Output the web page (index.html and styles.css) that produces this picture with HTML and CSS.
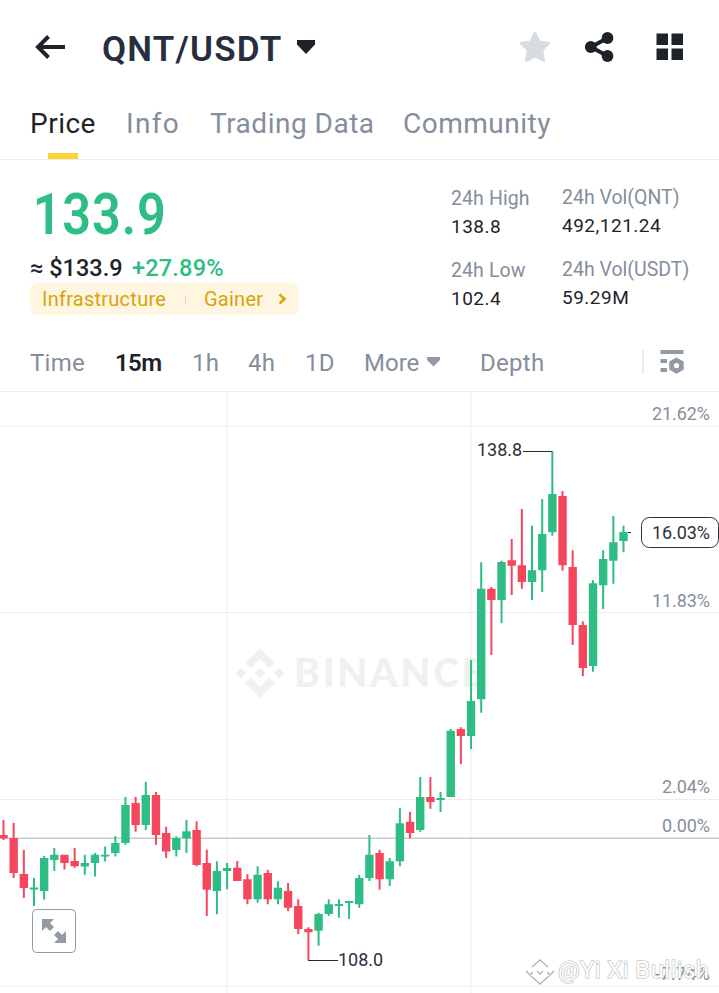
FILE: index.html
```html
<!DOCTYPE html>
<html lang="en">
<head>
    <meta charset="UTF-8">
    <meta name="viewport" content="width=device-width, initial-scale=1.0">
    <title>QNT/USDT</title>
    <link rel="stylesheet" href="styles.css">
</head>
<body>

    <!-- Top bar -->
    <header class="header">
        <svg class="back" width="32" height="26" viewBox="0 0 32 26"><path d="M31 13H5M14.500 2.500L4 13l10.500 10.500" fill="none" stroke="#1e2329" stroke-width="4"/></svg>
        <h1>QNT/USDT</h1>
        <svg class="pair-arrow" width="18" height="14" viewBox="0 0 18 14"><path d="M0 0h18v4.500L9 14 0 4.500z" fill="#1e2329"/></svg>
        <div class="header-icons">
            <svg width="30" height="30" viewBox="0 0 30 30"><path d="M15 1.500l4 8.500 9.500 1.300-6.800 6.700 1.800 10.500L15 24l-8.500 4.500L8.200 18 1.500 11.300 11 10z" fill="#d8dce1" stroke="#d8dce1" stroke-width="3" stroke-linejoin="round"/></svg>
            <svg width="30" height="30" viewBox="0 0 30 30"><path d="M23.500 6L7 15l16.500 9" fill="none" stroke="#1e2329" stroke-width="4"/><g fill="#1e2329"><circle cx="23.500" cy="6" r="5.900"/><circle cx="6.800" cy="15" r="5.900"/><circle cx="23.500" cy="24" r="5.900"/></g></svg>
            <svg width="28" height="28" viewBox="0 0 28 28"><path d="M.500.500H12V12H.500zM15.500.500H27V12H15.500zM.500 15.500H12V27H.500zM15.500 15.500H27V27H15.500z" fill="#1e2329"/></svg>
        </div>
    </header>

    <!-- Tabs -->
    <nav class="tabs">
        <a class="tab active">Price</a>
        <a class="tab tab-info">Info</a>
        <a class="tab tab-data">Trading Data</a>
        <a class="tab tab-community">Community</a>
    </nav>

    <!-- Price and 24h stats -->
    <section class="ticker">
        <div class="price-box">
            <div class="price">133.9</div>
            <div class="price-sub"><span class="usd">≈ $133.9</span><span class="change">+27.89%</span></div>
            <div class="tags">
                <span>Infrastructure</span>
                <i class="tag-line"></i>
                <span class="gainer">Gainer</span>
                <svg width="9" height="12" viewBox="0 0 9 12"><path d="M1.500 1.500L6.500 6l-5 4.500" fill="none" stroke="#d9a30d" stroke-width="2.600"/></svg>
            </div>
        </div>
        <div class="stats">
            <div class="stat"><p>24h High</p><b>138.8</b></div>
            <div class="stat"><p>24h Low</p><b>102.4</b></div>
        </div>
        <div class="stats volume">
            <div class="stat"><p class="vol-label">24h Vol(QNT)</p><b>492,121.24</b></div>
            <div class="stat"><p class="vol-label">24h Vol(USDT)</p><b>59.29M</b></div>
        </div>
    </section>

    <!-- Intervals -->
    <div class="intervals">
        <span class="time">Time</span>
        <span class="selected">15m</span>
        <span class="hour">1h</span>
        <span class="four">4h</span>
        <span class="day">1D</span>
        <span class="more">More</span>
        <svg class="more-arrow" width="13" height="10" viewBox="0 0 13 10"><path d="M0 0h13v3L6.500 9.500 0 3z" fill="#929aa5"/></svg>
        <span class="depth">Depth</span>
        <svg class="settings" width="24" height="24" viewBox="0 0 24 24">
            <path d="M.500 0h23v4H.500zM.500 9H7v4H.500zM.500 18H7v4H.500z" fill="#929aa5"/>
            <path d="M16.500 7.500l7.200 4v8.300l-7.200 4-7.200-4v-8.300zM16.500 12.900a2.700 2.700 0 100 5.400 2.700 2.700 0 000-5.400z" fill="#929aa5" fill-rule="evenodd"/>
        </svg>
    </div>

    <!-- Chart -->
    <svg class="chart" width="719" height="601" viewBox="0 392 719 601">
        <g class="grid">
            <path d="M0 426H719M0 986H719M227 392V993M471 392V993"/>
            <path class="thin" d="M0 612.500H719M0 799.500H719"/>
        </g>
        <path class="zero" d="M0 838.300H719"/>
        <g class="logo">
            <path d="M260 648l15 15-5.500 5.500-9.500-9.500-9.500 9.500-5.500-5.500zM260 698l15-15-5.500-5.500-9.500 9.500-9.500-9.500-5.500 5.500zM260 667.500l5.500 5.500-5.500 5.500-5.500-5.500zM241 667.500l5.500 5.500-5.500 5.500-5.500-5.500zM279 667.500l5.500 5.500-5.500 5.500-5.500-5.500z"/>
            <text x="294" y="687" textLength="190">BINANCE</text>
        </g>
        <g id="candles"></g>
        <path class="pointer" d="M523 451.500H552M308 960.500H338M628 532.500H631"/>
        <text class="mark" x="477" y="456" textLength="45">138.8</text>
        <text class="mark" x="338" y="966" textLength="45">108.0</text>
        <text class="scale" x="652" y="420" textLength="58">21.62%</text>
        <text class="scale" x="652" y="607" textLength="58">11.83%</text>
        <text class="scale" x="662" y="793" textLength="48">2.04%</text>
        <text class="scale" x="662" y="832" textLength="48">0.00%</text>
        <text class="scale" x="655" y="980" textLength="55">-7.74%</text>
        <rect class="tag-box" x="641.500" y="517.500" width="77" height="30" rx="8"/>
        <text class="mark" x="652" y="539" textLength="58">16.03%</text>
        <g class="expand">
            <rect x="32.500" y="909.500" width="43" height="43" rx="4"/>
            <path d="M42 919h12l-4 4 4 4-4 4-4-4-4 4zM66 943v-12l-4 4-4-4-4 4 4 4-4 4z"/>
        </g>
        <g class="author">
            <path d="M532 967l8-7 8 7M526 971l4 4 3-3M537 971l3 3 3-3M554 971l-4 4-3-3M531 976l9 8 9-8"/>
            <text x="558" y="978" textLength="151">@Yi Xi Bullish</text>
        </g>
    </svg>

    <script src="chart.js"></script>
</body>
</html>
```
FILE: styles.css
```css
* {
    box-sizing: border-box;
}

body {
    margin: 0;
    width: 719px;
    height: 993px;
    overflow: hidden;
    background: #fff;
    color: #1e2329;
    font-family: Roboto, "Noto Sans", sans-serif;
}

svg {
    display: block;
    flex: none;
}

/* Top bar */
.header {
    display: flex;
    align-items: center;
    height: 94px;
    padding: 0 35px 0 34px;
}

.header h1 {
    margin: 5px 0 0 36px;
    width: 179px;
    font-size: 35px;
    font-weight: 600;
    letter-spacing: 1.2px;
    white-space: nowrap;
    color: #252f40;
}

.pair-arrow {
    margin-left: 16px;
}

.header-icons {
    display: flex;
    align-items: center;
    margin-left: auto;
    gap: 34px;
}

.header-icons svg:last-child {
    margin-left: 8px;
}

/* Tabs */
.tabs {
    display: flex;
    height: 66px;
    padding-left: 30px;
    gap: 31px;
    border-bottom: 1px solid #eaecef;
}

.tab {
    position: relative;
    height: 65px;
    line-height: 59px;
    font-size: 28px;
    font-weight: 450;
    letter-spacing: .5px;
    white-space: nowrap;
    color: #848e9c;
}

.tab.active {
    width: 65px;
    color: #1e2329;
}

.tab-info {
    width: 53px;
    letter-spacing: 1.3px;
}

.tab-data {
    width: 162px;
}

.tab.active::after {
    content: "";
    position: absolute;
    left: 18px;
    bottom: 0;
    width: 30px;
    height: 6px;
    background: #fcd535;
}

/* Price */
.ticker {
    display: flex;
    height: 172px;
    padding: 20px 0 0 30px;
}

.price-box {
    width: 421px;
}

.price {
    padding-left: 3px;
    height: 70px;
    line-height: 70px;
    font-size: 57px;
    font-weight: 600;
    letter-spacing: 1px;
    color: #2ebd85;
    transform: scaleX(.885);
    transform-origin: left;
}

.price-sub {
    display: flex;
    height: 33px;
    line-height: 36px;
    font-size: 23.500px;
    font-weight: 500;
}

.usd {
    width: 102px;
}

.change {
    letter-spacing: .2px;
    color: #2ebd85;
}

.tags {
    display: flex;
    align-items: center;
    width: 269px;
    height: 32px;
    padding-left: 12px;
    border-radius: 8px;
    background: #fef6e1;
    color: #d9a30d;
    font-size: 20px;
    letter-spacing: .25px;
}

.tags span {
    width: 125px;
    white-space: nowrap;
}

.tag-line {
    width: 1px;
    height: 8px;
    margin: 0 18px;
    background: #f0d58e;
}

.tags .gainer {
    width: 61px;
    margin-right: 13px;
}

.stats {
    width: 111px;
    padding-top: 4px;
}

.stats.volume {
    width: 150px;
    padding-top: 3px;
}

.stat {
    height: 72px;
    white-space: nowrap;
}

.stat p {
    margin: 0;
    height: 28px;
    line-height: 29px;
    font-size: 19.500px;
    letter-spacing: .1px;
    color: #848e9c;
}

.volume p {
    letter-spacing: 0;
}

.stat b {
    display: block;
    line-height: 29px;
    font-size: 19px;
    font-weight: 400;
    letter-spacing: .5px;
}

/* Intervals */
.intervals {
    display: flex;
    align-items: center;
    height: 60px;
    padding: 1px 0 0 30px;
    border-bottom: 1px solid #eaecef;
    font-size: 24px;
    letter-spacing: .3px;
    color: #848e9c;
}

.intervals span {
    padding-top: 1px;
    white-space: nowrap;
}

.time {
    width: 85px;
}

.selected {
    width: 77px;
    font-weight: 600;
    letter-spacing: -.6px;
    color: #1e2329;
}

.hour {
    width: 56px;
}

.four {
    width: 57px;
}

.day {
    width: 59px;
}

.more {
    width: 63px;
}

.intervals .more {
    letter-spacing: 0;
}

.depth {
    width: 162px;
    margin-left: 40px;
}

.settings {
    box-sizing: content-box;
    padding-left: 16px;
    border-left: 2px solid #eaecef;
}

/* Chart */
.grid path {
    stroke: #f4f5f7;
    stroke-width: 2;
}

.grid .thin {
    stroke: #ebecee;
    stroke-width: 1;
}

.zero {
    stroke: #c5cad3;
    stroke-width: 1.400;
}

.logo {
    fill: #eff1f1;
}

.logo text {
    font-family: Lato, sans-serif;
    font-size: 39px;
    font-weight: 900;
}

.up {
    fill: #2ebd85;
}

.down {
    fill: #f6465d;
}

.pointer {
    stroke: #252b36;
}

.mark {
    fill: #2b313c;
    font-size: 18px;
}

.scale {
    fill: #848e9c;
    font-size: 18px;
}

.tag-box {
    fill: #fff;
    stroke: #2b313c;
}

.expand rect {
    fill: #fff;
    stroke: #929aa5;
}

.expand path {
    fill: #929aa5;
}

.author path {
    fill: none;
    stroke: #b4b6b9;
    stroke-width: 1.500;
}

.author text {
    fill: #fff;
    stroke: #b4b6b9;
    stroke-width: 1.200;
    paint-order: stroke;
    font-size: 24px;
}
```
FILE: chart.js
```js
// direction, high, body top, body bottom, low
const candles = [
    ['down', 820, 835, 838.3, 840], ['down', 823, 838, 873, 878], ['down', 850, 874, 888, 898],
    ['up', 878, 887.5, 889.5, 906], ['up', 856, 858, 891, 899.5], ['up', 848, 854.7, 860, 871],
    ['down', 854.7, 854.7, 863, 869.5], ['down', 848, 861, 866.3, 867.7], ['up', 854.7, 863, 866.5, 874.7],
    ['up', 853, 854.7, 863, 876.5], ['up', 846.5, 854.7, 856.5, 861.5], ['up', 836.3, 843, 853, 856.5],
    ['up', 797, 805, 843, 844.7], ['down', 797, 803, 825, 831.7], ['up', 782, 795, 825, 830],
    ['down', 792, 795, 835, 844.7], ['down', 826.7, 833, 851.5, 858], ['up', 836.3, 838, 850, 856.5],
    ['up', 820, 831.3, 838.3, 853], ['down', 821.3, 830, 865, 866.3], ['down', 849.7, 863, 889.7, 916],
    ['up', 861.3, 871, 891, 914.3], ['up', 863, 868, 871, 889.3], ['down', 861, 867.7, 881, 881],
    ['down', 874.3, 879.3, 899.3, 904.3], ['up', 866.3, 874.7, 899.3, 902.7], ['down', 869.7, 873, 899.3, 904.3],
    ['up', 881.3, 887.7, 899.3, 904.3], ['down', 883, 891, 907.7, 911], ['down', 899.3, 906, 929, 934],
    ['down', 927.3, 929, 932.3, 960.3], ['up', 912.7, 914, 930.7, 945.7], ['up', 899.3, 904.3, 914, 916],
    ['up', 899.3, 904, 906, 917.7], ['up', 901, 901, 903, 919], ['up', 874.7, 878, 904.3, 907.7],
    ['up', 835, 854.7, 878, 881], ['down', 849.7, 853, 879.3, 889.7], ['up', 858, 861.3, 879.3, 886],
    ['up', 808.3, 823.3, 861.3, 866.3], ['down', 811.7, 821.7, 833, 838.3], ['up', 777, 797, 830, 831.7],
    ['down', 777, 797, 802, 808.7], ['up', 792, 798, 800, 812], ['up', 729, 730.7, 797, 797],
    ['down', 727.3, 729, 736, 764], ['up', 660, 701, 736, 749], ['up', 562.3, 588.7, 699.3, 712.7],
    ['down', 587, 588.7, 600, 655], ['up', 560.7, 562, 600, 623.3], ['down', 539, 560.3, 565.7, 595],
    ['down', 509, 565.3, 582, 588.7], ['up', 525.7, 570.3, 582, 600], ['up', 499, 534, 570.3, 592],
    ['up', 451, 494, 532.3, 535.7], ['down', 491, 496, 565.3, 570.7], ['down', 550.3, 567, 625, 645],
    ['down', 621.3, 625, 668, 676.3], ['up', 580.3, 583.3, 666, 671.7], ['up', 550.3, 559, 585.3, 609],
    ['up', 516, 542.3, 560.7, 583.7], ['up', 525.7, 532, 541, 552.3]
];

const group = document.getElementById('candles');

candles.forEach(([type, high, top, bottom, low], i) => {
    const x = 3.5 + i * 10.164;
    const path = document.createElementNS('http://www.w3.org/2000/svg', 'path');
    path.setAttribute('class', type);
    path.setAttribute('d', `M${x - 1} ${high}h2V${low}h-2zM${x - 4.2} ${top}h8.4V${bottom}h-8.4z`);
    group.appendChild(path);
});
```
